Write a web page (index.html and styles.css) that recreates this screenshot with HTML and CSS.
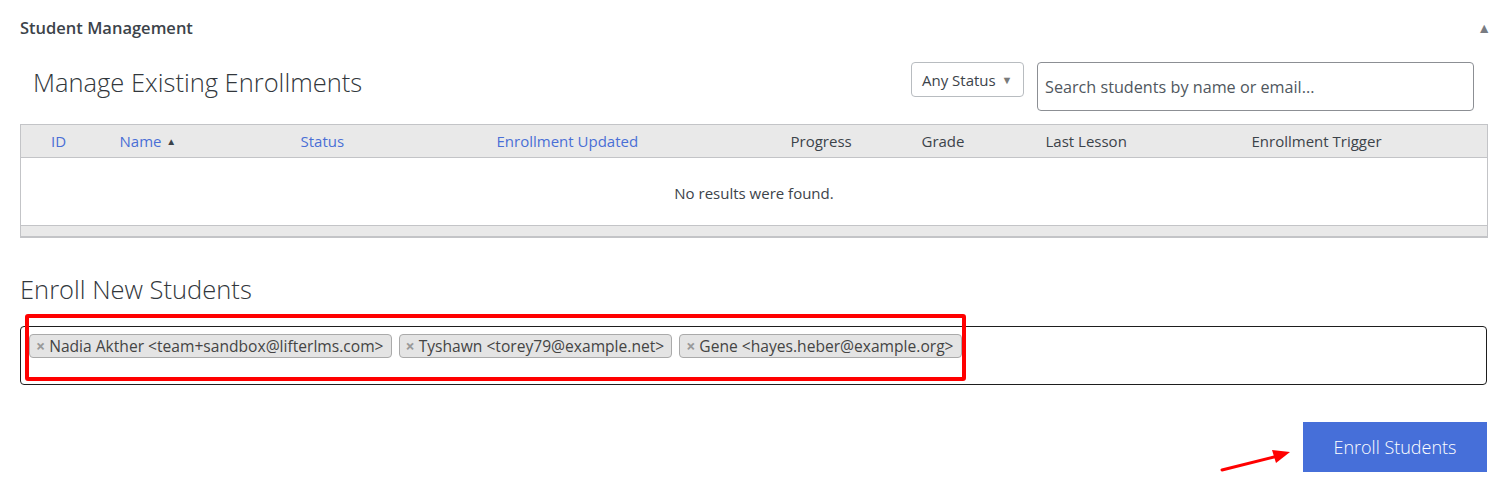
FILE: index.html
```html
<!DOCTYPE html>
<html lang="en">
<head>
    <meta charset="UTF-8">
    <meta name="viewport" content="width=device-width, initial-scale=1.0">
    <title>Student Management</title>
    <link rel="stylesheet" href="styles.css">
</head>
<body>
    <div class="panel">
        <div class="panel-head">
            <h3 class="panel-title">Student Management</h3>
            <span class="toggle">&#9650;</span>
        </div>

        <div class="toolbar">
            <h2 class="section-title manage-title">Manage Existing Enrollments</h2>
            <div class="filters">
                <div class="select">Any Status <span class="caret">&#9660;</span></div>
                <input class="search" type="text" placeholder="Search students by name or email...">
            </div>
        </div>

        <table class="enrollments">
            <colgroup>
                <col style="width: 89px">
                <col style="width: 181px">
                <col style="width: 196px">
                <col style="width: 294px">
                <col style="width: 131px">
                <col style="width: 124px">
                <col style="width: 206px">
                <col style="width: 246px">
            </colgroup>
            <thead>
                <tr>
                    <th class="sortable first">ID</th>
                    <th class="sortable">Name <span class="sort">&#9650;</span></th>
                    <th class="sortable">Status</th>
                    <th class="sortable">Enrollment Updated</th>
                    <th>Progress</th>
                    <th>Grade</th>
                    <th>Last Lesson</th>
                    <th>Enrollment Trigger</th>
                </tr>
            </thead>
            <tbody>
                <tr>
                    <td colspan="8" class="empty">No results were found.</td>
                </tr>
            </tbody>
            <tfoot>
                <tr>
                    <td colspan="8"></td>
                </tr>
            </tfoot>
        </table>

        <h2 class="section-title enroll-title">Enroll New Students</h2>

        <div class="enroll-wrap">
            <div class="enroll-box">
                <span class="chip"><span class="chip-x">&times;</span>Nadia Akther &lt;team+sandbox@lifterlms.com&gt;</span>
                <span class="chip"><span class="chip-x">&times;</span>Tyshawn &lt;torey79@example.net&gt;</span>
                <span class="chip"><span class="chip-x">&times;</span>Gene &lt;hayes.heber@example.org&gt;</span>
            </div>
            <div class="highlight"></div>
        </div>

        <div class="actions">
            <button class="btn-enroll">Enroll Students</button>
            <svg class="arrow" width="80" height="30" viewBox="0 0 80 30">
                <line x1="2" y1="26" x2="58" y2="12" stroke="#f00" stroke-width="3" stroke-linecap="round"/>
                <polygon points="70,8 52,6 56,19" fill="#f00"/>
            </svg>
        </div>
    </div>
</body>
</html>
```

FILE: styles.css
```css
* {
    box-sizing: border-box;
    margin: 0;
    padding: 0;
}

body {
    font-family: 'Open Sans', 'Noto Sans', sans-serif;
    background-color: #ffffff;
    color: #3c434a;
}

.panel {
    width: 1499px;
    padding: 0 12px 0 20px;
}

.panel-head {
    display: flex;
    justify-content: space-between;
    align-items: center;
    height: 54px;
}

.panel-title {
    font-size: 16.5px;
    font-weight: 600;
    color: #3c434a;
}

.toggle {
    font-size: 14px;
    color: #787c82;
    margin-right: -4px;
}

.toolbar {
    display: flex;
    justify-content: space-between;
    align-items: flex-start;
    padding-top: 8px;
    height: 70px;
}

.section-title {
    font-size: 25.5px;
    font-weight: 300;
    color: #32373c;
}

.manage-title {
    padding: 3px 0 0 13px;
}

.filters {
    display: flex;
    gap: 13px;
    margin-right: 13px;
}

.select {
    width: 113px;
    height: 35px;
    border: 1px solid #b8bcc0;
    border-radius: 4px;
    font-size: 15px;
    color: #3c434a;
    padding: 7px 0 0 10px;
}

.caret {
    font-size: 11px;
    color: #7a7a7a;
    margin-left: 2px;
    vertical-align: 2px;
}

.search {
    width: 437px;
    height: 49px;
    border: 1px solid #8c8f94;
    border-radius: 4px;
    padding: 0 7px;
    font-family: inherit;
    font-size: 16.2px;
    color: #2c3338;
}

.search::placeholder {
    color: #50575e;
}

.enrollments {
    width: 1467px;
    table-layout: fixed;
    border-collapse: collapse;
    border: 1px solid #c3c4c7;
    border-bottom: 2px solid #c3c4c7;
}

.enrollments th {
    height: 33px;
    background-color: #e9e9e9;
    border-bottom: 1px solid #c3c4c7;
    text-align: left;
    font-size: 15px;
    font-weight: 400;
    color: #3c434a;
    padding: 0 0 0 10px;
}

.enrollments th.first {
    padding-left: 30px;
}

.enrollments th.sortable {
    color: #4a6fd6;
}

.sort {
    font-size: 10px;
    color: #3c434a;
    vertical-align: 2px;
    margin-left: 1px;
}

.empty {
    height: 68px;
    padding-top: 3px;
    text-align: center;
    font-size: 15px;
    color: #3c434a;
}

.enrollments tfoot td {
    height: 11px;
    background-color: #e9e9e9;
    border-top: 1px solid #c3c4c7;
}

.enroll-title {
    margin-top: 34px;
    height: 54px;
}

.enroll-wrap {
    position: relative;
}

.enroll-box {
    display: flex;
    flex-wrap: wrap;
    gap: 7px;
    height: 59px;
    border: 1px solid #1e1e1e;
    border-radius: 4px;
    padding: 7px 8px;
    align-items: flex-start;
}

.chip {
    display: inline-flex;
    align-items: center;
    height: 24px;
    background-color: #e4e4e4;
    border: 1px solid #aaaaaa;
    border-radius: 4px;
    padding: 0 7px 0 6px;
    font-size: 15.6px;
    color: #444444;
}

.chip-x {
    color: #999999;
    font-weight: 700;
    font-size: 16px;
    margin-right: 4px;
}

.highlight {
    position: absolute;
    left: 5px;
    top: -12px;
    width: 941px;
    height: 67px;
    border: 4px solid #ff0000;
    border-radius: 3px;
    pointer-events: none;
}

.actions {
    position: relative;
    display: flex;
    justify-content: flex-end;
    padding-top: 37px;
}

.btn-enroll {
    width: 184px;
    height: 50px;
    background-color: #466fd9;
    border: none;
    color: #ffffff;
    font-family: inherit;
    font-size: 18px;
    font-weight: 300;
    cursor: pointer;
}

.arrow {
    position: absolute;
    left: 1200px;
    top: 59px;
}
```
